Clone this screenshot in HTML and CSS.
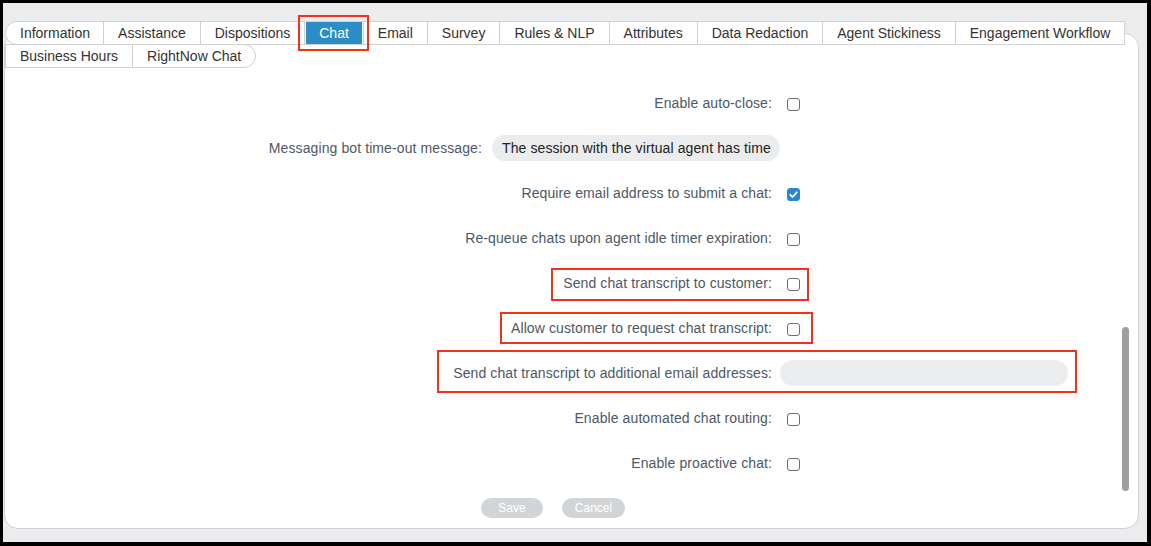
FILE: index.html
```html
<!DOCTYPE html>
<html lang="en">
<head>
<meta charset="utf-8">
<title>Chat settings</title>
<link rel="stylesheet" href="styles.css">
</head>
<body>
<div class="screen">
  <div class="panel">
    <div class="tabbar">
      <div class="tabrow">
        <div class="tab first">Information</div>
        <div class="tab">Assistance</div>
        <div class="tab">Dispositions</div>
        <div class="tab active"><span>Chat</span></div>
        <div class="tab">Email</div>
        <div class="tab">Survey</div>
        <div class="tab">Rules &amp; NLP</div>
        <div class="tab">Attributes</div>
        <div class="tab">Data Redaction</div>
        <div class="tab">Agent Stickiness</div>
        <div class="tab">Engagement Workflow</div>
      </div>
      <div class="tabrow second">
        <div class="tab first">Business Hours</div>
        <div class="tab last">RightNow Chat</div>
      </div>
    </div>

    <div class="form">
      <div class="row">
        <div class="label">Enable auto-close:</div>
        <div class="control"><span class="cb"></span></div>
      </div>
      <div class="row">
        <div class="label with-input">
          <span>Messaging bot time-out message:</span>
          <div class="field"><span class="field-text">The session with the virtual agent has time</span></div>
        </div>
        <div class="control"></div>
      </div>
      <div class="row">
        <div class="label">Require email address to submit a chat:</div>
        <div class="control"><span class="cb checked"><svg viewBox="0 0 13 13" width="13" height="13"><path d="M3.3 6.8 L5.6 9 L9.8 4.4" fill="none" stroke="#fff" stroke-width="1.8" stroke-linecap="round" stroke-linejoin="round"/></svg></span></div>
      </div>
      <div class="row">
        <div class="label">Re-queue chats upon agent idle timer expiration:</div>
        <div class="control"><span class="cb"></span></div>
      </div>
      <div class="row">
        <div class="label">Send chat transcript to customer:</div>
        <div class="control"><span class="cb"></span></div>
      </div>
      <div class="row">
        <div class="label">Allow customer to request chat transcript:</div>
        <div class="control"><span class="cb"></span></div>
      </div>
      <div class="row">
        <div class="label">Send chat transcript to additional email addresses:</div>
        <div class="control"><div class="field wide"></div></div>
      </div>
      <div class="row">
        <div class="label">Enable automated chat routing:</div>
        <div class="control"><span class="cb"></span></div>
      </div>
      <div class="row">
        <div class="label">Enable proactive chat:</div>
        <div class="control"><span class="cb"></span></div>
      </div>
    </div>

    <div class="footer">
      <button class="btn save">Save</button>
      <button class="btn cancel">Cancel</button>
    </div>

    <div class="scroll-thumb"></div>
  </div>

  <div class="mark mark-chat"></div>
  <div class="mark mark-send"></div>
  <div class="mark mark-allow"></div>
  <div class="mark mark-additional"></div>
</div>
</body>
</html>
```

FILE: styles.css
```css
* { box-sizing: border-box; }

html, body {
  margin: 0;
  padding: 0;
  background: #000;
}

body {
  font-family: "Liberation Sans", Arial, Helvetica, sans-serif;
  font-size: 14px;
}

.screen {
  position: relative;
  width: 1151px;
  height: 546px;
  border-style: solid;
  border-color: #000;
  border-width: 3px 4px 4px 3px;
  background: #ebecee;
  padding: 30px 8px 13px 1px;
  overflow: hidden;
}

.panel {
  position: relative;
  height: 100%;
  background: #fff;
  border: 1px solid #cfd1d4;
  border-radius: 14px;
}

/* Tabs */
.tabbar {
  margin-top: -13px;
  display: flex;
  flex-direction: column;
  align-items: flex-start;
}

.tabrow {
  display: flex;
}

.tabrow.second {
  margin-top: -1px;
}

.tab {
  height: 24px;
  line-height: 22px;
  padding: 0 14px;
  border: 1px solid #cfd1d4;
  margin-left: -1px;
  background: #fff;
  color: #333;
  white-space: nowrap;
}

.tab.first {
  margin-left: 0;
  border-radius: 12px 0 0 12px;
  padding-right: 13px;
}

.tabrow.second .tab.first {
  border-radius: 0;
  padding-right: 14px;
}

.tab.last {
  border-radius: 0 12px 12px 0;
}

.tab.active {
  padding: 0 1px;
  display: flex;
}

.tab.active span {
  display: block;
  background: #2b8dc6;
  color: #fff;
  padding: 0 13px;
  height: 22px;
  line-height: 22px;
}

/* Form */
.form {
  padding-top: 12px;
}

.row {
  display: grid;
  grid-template-columns: 767px 1fr;
  column-gap: 15px;
  height: 45px;
  align-items: center;
}

.label {
  text-align: right;
  color: #4d5866;
  white-space: nowrap;
  letter-spacing: 0.1px;
}

.label.with-input {
  display: flex;
  justify-content: flex-end;
  align-items: center;
  gap: 10px;
  margin-right: -8px;
}

.control {
  display: flex;
  align-items: center;
}

.cb {
  display: block;
  width: 13px;
  height: 13px;
  border: 1px solid #6e6e6e;
  border-radius: 3px;
  background: #fff;
  margin-top: 3px;
}

.cb svg {
  display: block;
  margin: -1px;
}

.cb.checked {
  border-color: #2a86cf;
  background: #2a86cf;
}

.field {
  width: 288px;
  height: 26px;
  border-radius: 13px;
  background: #ebecee;
  overflow: hidden;
  padding: 0 6px 0 10px;
  line-height: 26px;
  white-space: nowrap;
  color: #222;
  text-align: left;
  letter-spacing: 0.1px;
}

.field-text {
  display: block;
}

.field.wide {
  margin-left: -7px;
}

/* Footer buttons */
.footer {
  display: flex;
  gap: 19px;
  padding-left: 476px;
  margin-top: 13px;
}

.btn {
  height: 20px;
  border: none;
  border-radius: 10px;
  background: #d2d5d8;
  color: #fff;
  font-family: "Liberation Sans", Arial, sans-serif;
  font-size: 12px;
  padding: 0;
}

.btn.save { width: 62px; }
.btn.cancel { width: 63px; }

.scroll-thumb {
  position: absolute;
  left: 1117px;
  top: 293px;
  width: 7px;
  height: 164px;
  border-radius: 4px;
  background: #9f9f9f;
}

/* Red annotation boxes */
.mark {
  position: absolute;
  border: 2px solid #f2311a;
}

.mark-chat { left: 295px; top: 12px; width: 71px; height: 36px; }
.mark-send { left: 548px; top: 265px; width: 258px; height: 33px; }
.mark-allow { left: 497px; top: 309px; width: 313px; height: 32px; }
.mark-additional { left: 434px; top: 347px; width: 640px; height: 43px; }
```
